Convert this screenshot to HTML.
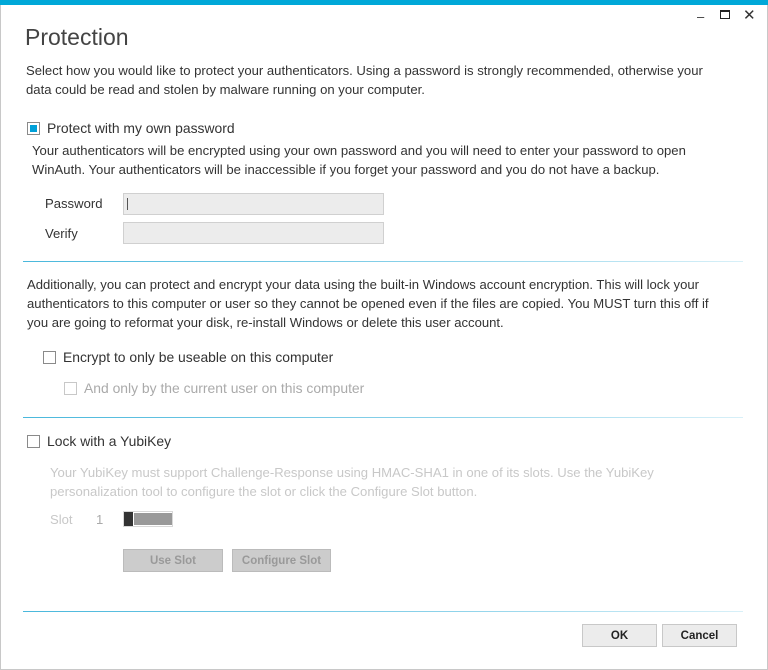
<!DOCTYPE html>
<html><head><meta charset="utf-8"><style>
*{margin:0;padding:0;box-sizing:border-box}
body{width:768px;height:670px;background:#fff;font-family:"Liberation Sans",sans-serif;font-size:13.1px;color:#333;position:relative;overflow:hidden}
.frame{position:absolute;left:0;top:0;width:768px;height:670px;border:1px solid #c8c8c8;border-top:none}
.bar{position:absolute;left:0;top:0;width:768px;height:5px;background:#00a8d8}
.a{position:absolute;white-space:nowrap}
.p{line-height:19px}
.cb{position:absolute;width:13px;height:13px;border:1px solid #8a8a8a;background:#fff}
.cb.dis{border-color:#c8c8c8}
.in{position:absolute;left:123px;width:261px;height:22px;background:#ececec;border:1px solid #d0d0d0}
.sep{position:absolute;left:23px;width:720px;height:1px;background:linear-gradient(to right,#4ab8dc,#8fd3ea 60%,#d8f0f8)}
.btn{position:absolute;height:23px;border:1px solid #c8c8c8;background:#ececec;font-weight:bold;font-size:11.5px;text-align:center;line-height:22px}
.dim{color:#c8c8c8}
.lb{font-size:13.9px}
</style></head><body>
<div class="frame"></div>
<div class="bar"></div>
<div class="a" style="left:697px;top:9px;font-size:13px">&#8211;</div>
<div class="a" style="left:720px;top:10px;width:10px;height:9px;border:1.5px solid #222;border-top-width:2px"></div>
<div class="a" style="left:743px;top:6px;font-size:15px">&#10005;</div>
<div class="a" style="left:25px;top:24px;font-size:23px;color:#444">Protection</div>
<div class="a p" style="left:26px;top:61px">Select how you would like to protect your authenticators. Using a password is strongly recommended, otherwise your<br>data could be read and stolen by malware running on your computer.</div>
<div class="cb" style="left:27px;top:122px"><div style="position:absolute;left:2px;top:2px;width:7px;height:7px;background:#00a0d8"></div></div>
<div class="a lb" style="left:47px;top:120px">Protect with my own password</div>
<div class="a p" style="left:32px;top:141px">Your authenticators will be encrypted using your own password and you will need to enter your password to open<br>WinAuth. Your authenticators will be inaccessible if you forget your password and you do not have a backup.</div>
<div class="a" style="left:45px;top:196px">Password</div>
<div class="in" style="top:193px"><div style="position:absolute;left:3px;top:4px;width:1px;height:12px;background:#555"></div></div>
<div class="a" style="left:45px;top:226px">Verify</div>
<div class="in" style="top:222px"></div>
<div class="sep" style="top:261px"></div>
<div class="a p" style="left:27px;top:275px">Additionally, you can protect and encrypt your data using the built-in Windows account encryption. This will lock your<br>authenticators to this computer or user so they cannot be opened even if the files are copied. You MUST turn this off if<br>you are going to reformat your disk, re-install Windows or delete this user account.</div>
<div class="cb" style="left:43px;top:351px"></div>
<div class="a lb" style="left:63px;top:349px">Encrypt to only be useable on this computer</div>
<div class="cb dis" style="left:64px;top:382px"></div>
<div class="a lb" style="left:84px;top:380px;color:#aaa">And only by the current user on this computer</div>
<div class="sep" style="top:417px"></div>
<div class="cb" style="left:27px;top:435px"></div>
<div class="a lb" style="left:47px;top:433px">Lock with a YubiKey</div>
<div class="a p dim" style="left:50px;top:463px">Your YubiKey must support Challenge-Response using HMAC-SHA1 in one of its slots. Use the YubiKey<br>personalization tool to configure the slot or click the Configure Slot button.</div>
<div class="a dim" style="left:50px;top:512px">Slot</div>
<div class="a" style="left:96px;top:512px;color:#aaa">1</div>
<div class="a" style="left:123px;top:511px;width:50px;height:16px;border:1px solid #d8d8d8;background:#fff"><div style="position:absolute;left:0;top:0;width:9px;height:14px;background:#333"></div><div style="position:absolute;left:10px;top:1px;width:38px;height:12px;background:#999"></div></div>
<div class="btn" style="left:123px;top:549px;width:100px;color:#999;background:#ccc;border-color:#bbb">Use Slot</div>
<div class="btn" style="left:232px;top:549px;width:99px;color:#999;background:#ccc;border-color:#bbb">Configure Slot</div>
<div class="sep" style="top:611px"></div>
<div class="btn" style="left:582px;top:624px;width:75px;color:#222">OK</div>
<div class="btn" style="left:662px;top:624px;width:75px;color:#222">Cancel</div>
</body></html>
